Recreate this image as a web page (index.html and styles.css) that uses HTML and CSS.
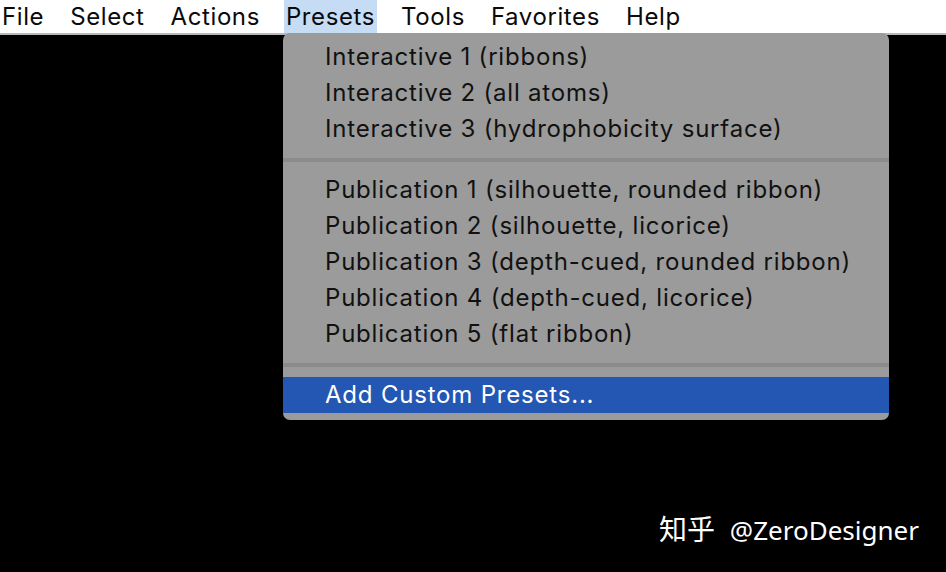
FILE: index.html
```html
<!DOCTYPE html>
<html>
<head>
<meta charset="utf-8">
<link rel="stylesheet" href="styles.css">
</head>
<body>
<div class="screen">
  <nav class="menubar">
    <span class="menu-item">File</span>
    <span class="menu-item">Select</span>
    <span class="menu-item">Actions</span>
    <span class="menu-item active">Presets</span>
    <span class="menu-item">Tools</span>
    <span class="menu-item">Favorites</span>
    <span class="menu-item">Help</span>
  </nav>
  <div class="dropdown">
    <div class="group">
      <div class="row">Interactive 1 (ribbons)</div>
      <div class="row">Interactive 2 (all atoms)</div>
      <div class="row">Interactive 3 (hydrophobicity surface)</div>
    </div>
    <div class="sep"></div>
    <div class="group">
      <div class="row">Publication 1 (silhouette, rounded ribbon)</div>
      <div class="row">Publication 2 (silhouette, licorice)</div>
      <div class="row">Publication 3 (depth-cued, rounded ribbon)</div>
      <div class="row">Publication 4 (depth-cued, licorice)</div>
      <div class="row">Publication 5 (flat ribbon)</div>
    </div>
    <div class="sep"></div>
    <div class="group">
      <div class="row selected">Add Custom Presets...</div>
    </div>
  </div>
  <div class="watermark"><span class="cjk">知乎</span> @ZeroDesigner</div>
</div>
</body>
</html>
```

FILE: styles.css
```css
html, body {
  margin: 0;
  padding: 0;
  background: #000;
}
.screen {
  position: relative;
  width: 946px;
  height: 572px;
  overflow: hidden;
  background: #000;
  font-family: Inter, "Liberation Sans", sans-serif;
}
.menubar {
  display: flex;
  height: 33px;
  background: #fff;
  border-bottom: 2px solid #b9b9b9;
  gap: 22px;
}
.menu-item {
  font-size: 24px;
  line-height: 33px;
  color: #0a0a0a;
  padding: 0 2px;
  letter-spacing: 0.6px;
}
.menu-item.active {
  background: #c6dcf4;
}
.dropdown {
  position: absolute;
  left: 283px;
  top: 33px;
  width: 606px;
  background: #9b9b9b;
  border-radius: 7px;
  padding-top: 6px;
  padding-bottom: 7px;
  box-sizing: border-box;
}
.group {
  display: flex;
  flex-direction: column;
}
.row {
  height: 36px;
  line-height: 36px;
  font-size: 24px;
  color: #111;
  padding-left: 42px;
  letter-spacing: 0.8px;
}
.sep {
  height: 4px;
  background: #8b8b8b;
  margin: 11px 0 10px;
}
.row.selected {
  background: #2456b3;
  color: #fff;
}
.watermark {
  position: absolute;
  right: 27px;
  top: 508px;
  font-family: "Noto Sans", "Noto Sans CJK SC", sans-serif;
  font-size: 26px;
  color: #fff;
}
.cjk {
  font-size: 28px;
  margin-right: 8px;
}
```
